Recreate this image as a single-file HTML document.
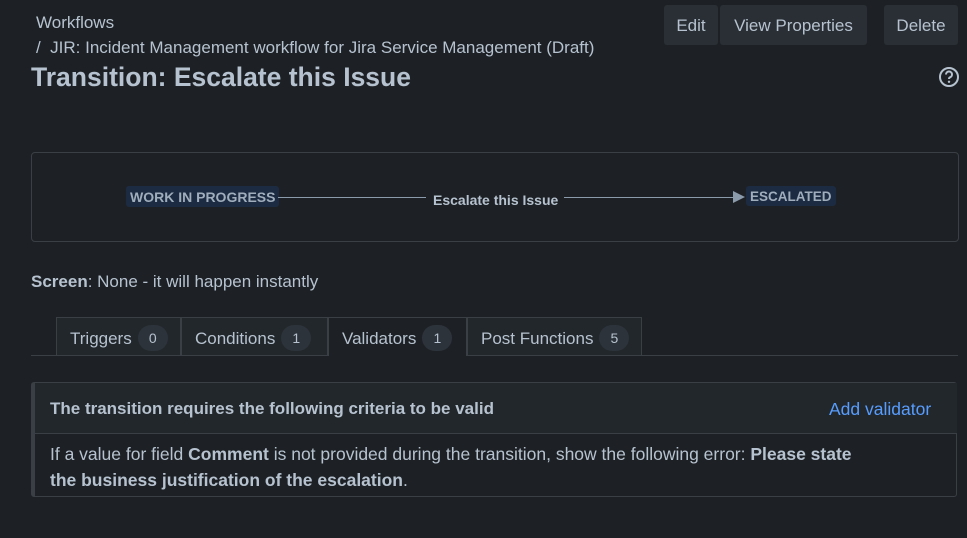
<!DOCTYPE html>
<html><head><meta charset="utf-8"><style>
body{margin:0;width:967px;height:538px;background:#1d2125;color:#b6c2cf;font-family:"Liberation Sans",sans-serif;position:relative;overflow:hidden}
.a{position:absolute;white-space:nowrap}
.btn{position:absolute;top:5px;height:40px;background:#2a2f35;border-radius:3px;color:#b6c2cf;font-size:17px;line-height:42px;text-align:center}
.lz{background:#1c2b41;color:#9fadbc;font-weight:bold;font-size:14px;padding:3px 4px 2px;border-radius:3px}
.tab{position:absolute;top:317px;height:38px;background:#22272b;border:1px solid #3a3f45;border-bottom:none;font-size:17px;line-height:41px;padding-left:13px;box-sizing:border-box}
.bd{display:inline-block;width:30px;height:26px;border-radius:13px;background:#2c333a;text-align:center;line-height:26px;font-size:14px;margin-left:6px;vertical-align:1px}
</style></head><body>
<div class="a" style="left:36px;top:13px;font-size:17px">Workflows</div>
<div class="a" style="left:36px;top:38px;font-size:17px">/&nbsp;&nbsp;JIR: Incident Management workflow for Jira Service Management (Draft)</div>
<div class="a" style="left:31px;top:62px;font-size:26.5px;font-weight:bold;color:#b6c2cf">Transition: Escalate this Issue</div>
<div class="btn" style="left:664px;width:54px">Edit</div>
<div class="btn" style="left:720px;width:147px">View Properties</div>
<div class="btn" style="left:884px;width:74px">Delete</div>
<svg class="a" style="left:938px;top:66px" width="22" height="22" viewBox="0 0 22 22"><circle cx="11" cy="11" r="9" fill="none" stroke="#b6c2cf" stroke-width="2"/><path d="M8 8.5a3 3 0 1 1 4 2.8c-.8.4-1 .9-1 1.7" fill="none" stroke="#b6c2cf" stroke-width="2"/><circle cx="11" cy="15.8" r="1.2" fill="#b6c2cf"/></svg>
<div class="a" style="left:31px;top:152px;width:926px;height:88px;border:1px solid #3a3f45;border-radius:4px"></div>
<div class="a lz" style="left:126px;top:186px">WORK IN PROGRESS</div>
<div class="a" style="left:278px;top:197px;width:148px;height:1px;background:#8c9bab"></div>
<div class="a" style="left:433px;top:192px;font-size:14px;font-weight:bold">Escalate this Issue</div>
<div class="a" style="left:564px;top:197px;width:170px;height:1px;background:#8c9bab"></div>
<div class="a" style="left:733px;top:191px;width:0;height:0;border-left:12px solid #8c9bab;border-top:6px solid transparent;border-bottom:6px solid transparent"></div>
<div class="a lz" style="left:746px;top:186px;font-size:13.5px">ESCALATED</div>
<div class="a" style="left:31px;top:272px;font-size:17px"><b>Screen</b>: None - it will happen instantly</div>
<div class="a" style="left:31px;top:355px;width:927px;height:1px;background:#3a3f45"></div>
<div class="tab" style="left:56px;width:125px">Triggers<span class="bd">0</span></div>
<div class="tab" style="left:181px;width:147px">Conditions<span class="bd">1</span></div>
<div class="tab" style="left:328px;width:139px;background:#1d2125;height:39px">Validators<span class="bd">1</span></div>
<div class="tab" style="left:467px;width:175px">Post Functions<span class="bd">5</span></div>
<div class="a" style="left:31px;top:382px;width:926px;height:115px;border:1px solid #3a3f45;border-left:4px solid #3a3f45;border-radius:3px;box-sizing:border-box"></div>
<div class="a" style="left:35px;top:383px;width:922px;height:50px;background:#22272b;border-bottom:1px solid #3a3f45"></div>
<div class="a" style="left:50px;top:399px;font-size:17px;font-weight:bold">The transition requires the following criteria to be valid</div>
<div class="a" style="left:829px;top:399px;font-size:17.5px;color:#579dff">Add validator</div>
<div class="a" style="left:50px;top:441px;font-size:17.5px;line-height:26px">If a value for field <b>Comment</b> is not provided during the transition, show the following error: <b>Please state</b><br><b>the business justification of the escalation</b>.</div>
</body></html>
